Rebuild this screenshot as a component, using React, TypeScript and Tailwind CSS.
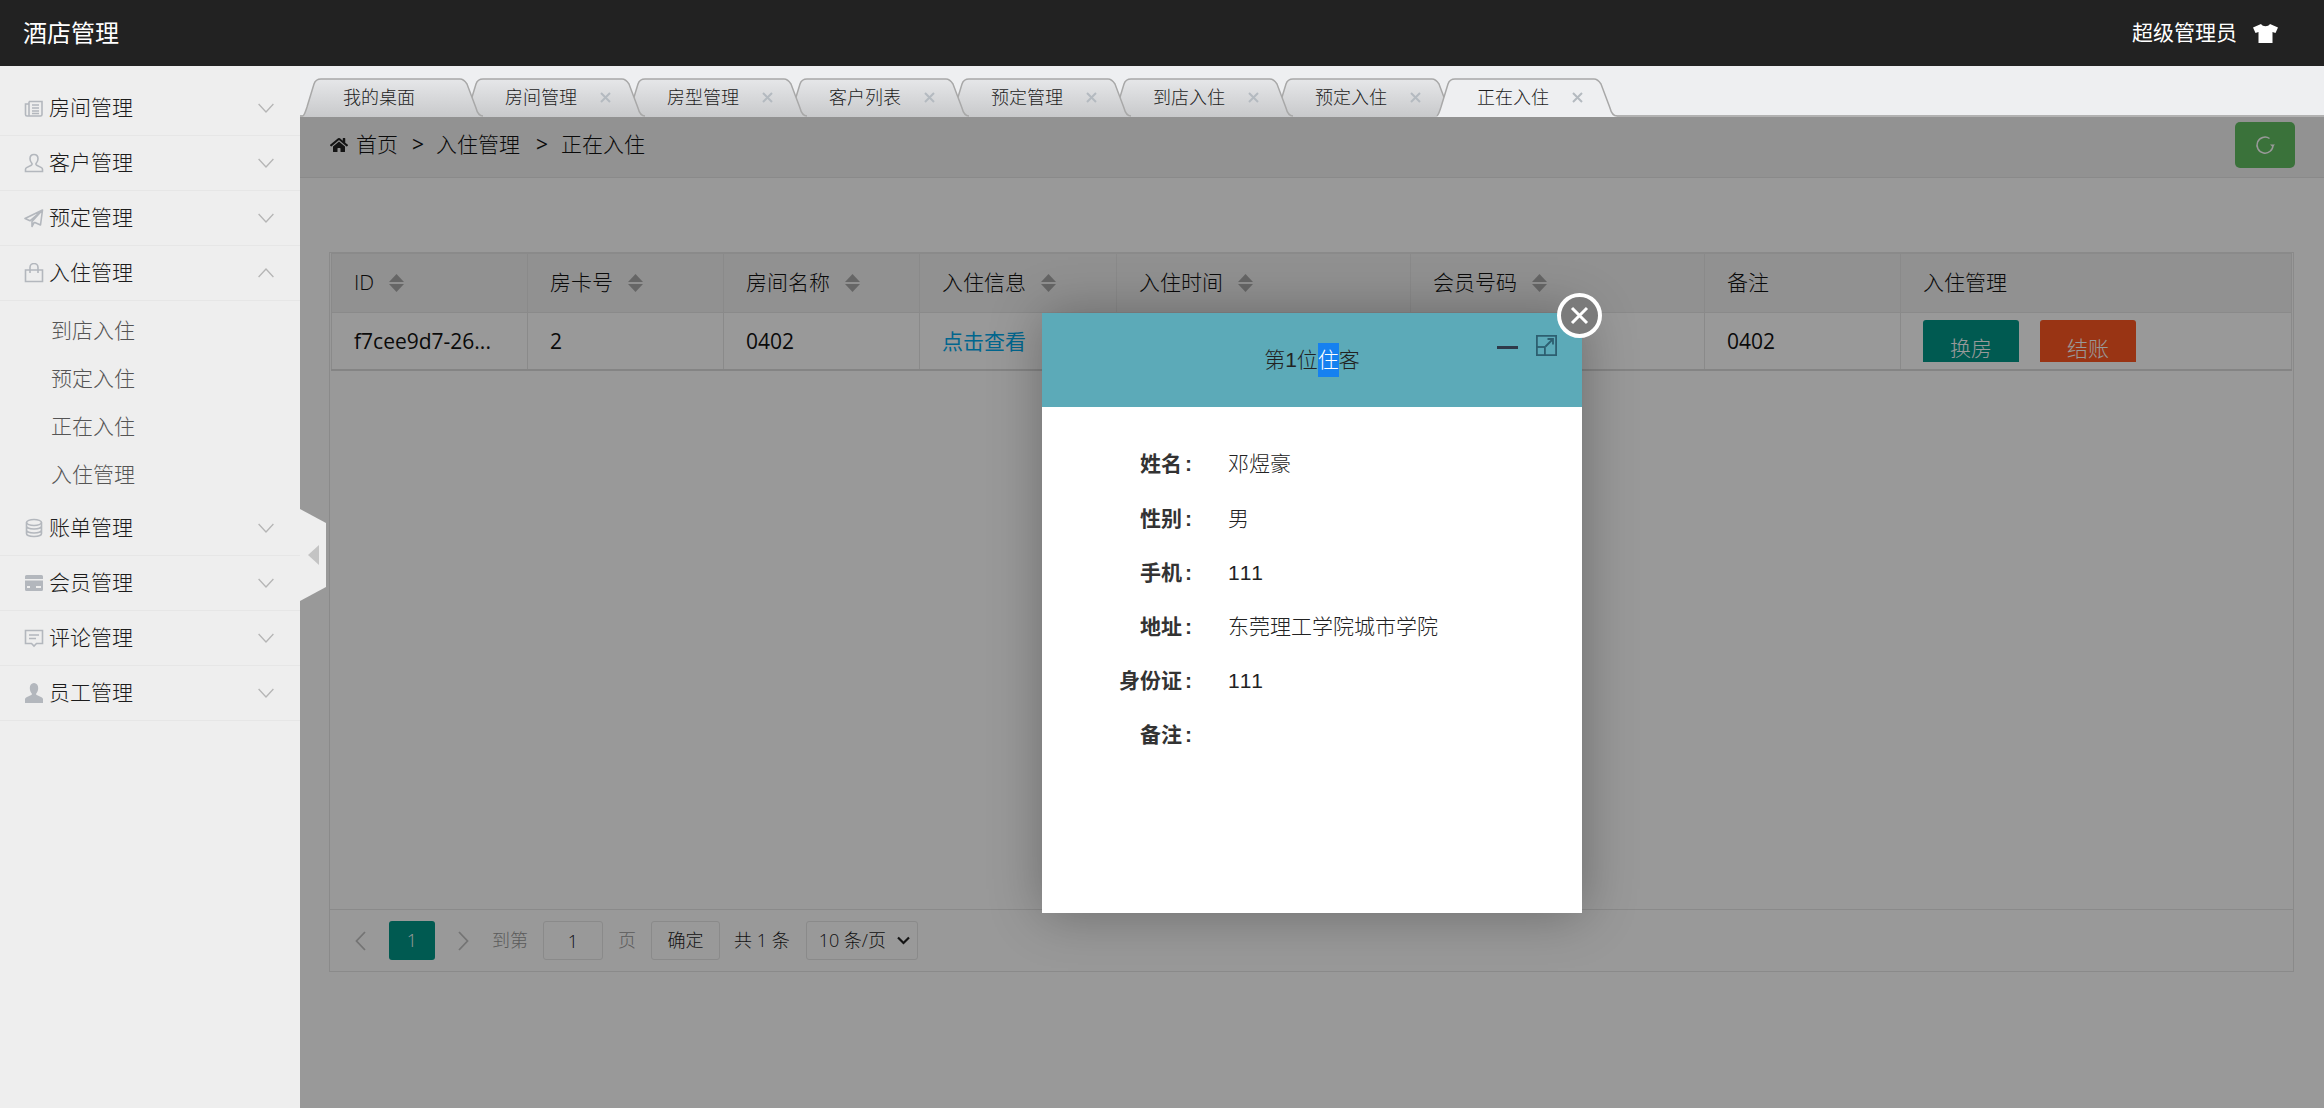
import React from "react";
import { FaHome } from "react-icons/fa";

const menuIcon = "w-5 h-5 shrink-0 text-[#b3b7bd]";

const IconNews = () => (
  <svg className={menuIcon} viewBox="0 0 20 20" fill="none" stroke="currentColor" strokeWidth="1.6">
    <path d="M5 3.500h13v13a1.500 1.500 0 0 1-1.500 1.500H3a1.500 1.500 0 0 1-1.500-1.500V6H5" />
    <path d="M5 3.500V18M8 7h7M8 10h7M8 13h7M8 15.500h7" />
  </svg>
);
const IconUser = () => (
  <svg className={menuIcon} viewBox="0 0 20 20" fill="none" stroke="currentColor" strokeWidth="1.6">
    <path d="M10 1.500c-2.400 0-4 1.800-4 4.300 0 2 .8 3.400 1.800 4.500.5.600.3 1.600-.5 2L2.600 14.600c-.8.400-1.100 1-1.100 1.900v2h17v-2c0-.9-.3-1.500-1.100-1.900l-4.700-2.300c-.8-.4-1-1.400-.5-2 1-1.100 1.800-2.500 1.800-4.500 0-2.500-1.600-4.300-4-4.300z" />
  </svg>
);
const IconPlane = () => (
  <svg className={menuIcon} viewBox="0 0 20 20" fill="none" stroke="currentColor" strokeWidth="1.6">
    <path d="M18.500 2 1 10.500l5 2.300L18.500 2zM18.500 2 16.500 17l-6.200-2.800M18.500 2 8 13.500v5l2.300-4.300" strokeLinejoin="round" />
  </svg>
);
const IconBag = () => (
  <svg className={menuIcon} viewBox="0 0 20 20" fill="none" stroke="currentColor" strokeWidth="1.6">
    <path d="M1.500 7h17v11.500h-17zM6 7V4.500a4 4 0 0 1 8 0V7M6 7v3M14 7v3" />
  </svg>
);
const IconDb = () => (
  <svg className={menuIcon} viewBox="0 0 20 20" fill="none" stroke="currentColor" strokeWidth="1.6">
    <ellipse cx="10" cy="4.500" rx="7.500" ry="3" />
    <path d="M2.500 4.500v11c0 1.700 3.400 3 7.500 3s7.500-1.300 7.500-3v-11M2.500 8c0 1.700 3.400 3 7.500 3s7.500-1.300 7.500-3M2.500 12c0 1.700 3.400 3 7.500 3s7.500-1.300 7.500-3" />
  </svg>
);
const IconCard = () => (
  <svg className={menuIcon} viewBox="0 0 20 20" fill="currentColor">
    <path d="M1 3.500A1.500 1.500 0 0 1 2.500 2h15A1.500 1.500 0 0 1 19 3.500V6H1zM1 7.500h18v9a1.500 1.500 0 0 1-1.500 1.500h-15A1.500 1.500 0 0 1 1 16.500zM3 13v2h3v-2zm9 0v2h5v-2z" fillRule="evenodd" />
  </svg>
);
const IconComment = () => (
  <svg className={menuIcon} viewBox="0 0 20 20" fill="none" stroke="currentColor" strokeWidth="1.6">
    <path d="M1.500 2.500h17v13h-6L10 18l-2.500-2.500h-6zM5 7h10M5 10.500h7" />
  </svg>
);
const IconPerson = () => (
  <svg className={menuIcon} viewBox="0 0 20 20" fill="currentColor">
    <path d="M10 0c2.700 0 4.200 2.200 4.200 5 0 2.400-.9 4.400-2 5.600v1.200l5.300 2.400c1 .5 1.500 1.200 1.500 2.300V20H1v-3.500c0-1.100.5-1.800 1.500-2.300l5.300-2.400v-1.200c-1.100-1.200-2-3.200-2-5.600C5.800 2.200 7.300 0 10 0z" />
  </svg>
);

const Chevron = ({ up = false }: { up?: boolean }) => (
  <svg width="16" height="10" viewBox="0 0 16 10" fill="none" stroke="#b5b5b5" strokeWidth="1.300" className="shrink-0">
    {up ? <path d="M.6 9 8 1l7.400 8" /> : <path d="M.6 1 8 9l7.400-8" />}
  </svg>
);

const MenuRow = ({ icon, label, open = false }: { icon: React.ReactNode; label: string; open?: boolean }) => (
  <div className="h-[55px] border-b border-[#e6e6e6] flex items-center pl-[24px] pr-[26px] text-[21px] text-[#1c1c1c]">
    {icon}
    <span className="ml-[5px] flex-1">{label}</span>
    <Chevron up={open} />
  </div>
);

const SubItem = ({ label }: { label: string }) => (
  <div className="h-[48px] flex items-center pl-[51px] text-[21px] text-[#555]">{label}</div>
);

const Sidebar = () => (
  <aside className="relative z-10 w-[300px] shrink-0 bg-[#eeeeee] pt-[15px]">
    <MenuRow icon={<IconNews />} label="房间管理" />
    <MenuRow icon={<IconUser />} label="客户管理" />
    <MenuRow icon={<IconPlane />} label="预定管理" />
    <MenuRow icon={<IconBag />} label="入住管理" open />
    <div className="pt-[6px] pb-[2px]">
      <SubItem label="到店入住" />
      <SubItem label="预定入住" />
      <SubItem label="正在入住" />
      <SubItem label="入住管理" />
    </div>
    <MenuRow icon={<IconDb />} label="账单管理" />
    <MenuRow icon={<IconCard />} label="会员管理" />
    <MenuRow icon={<IconComment />} label="评论管理" />
    <MenuRow icon={<IconPerson />} label="员工管理" />
    <svg className="absolute left-full top-[443px]" width="26" height="92" viewBox="0 0 26 92">
      <polygon points="0,0 26,14 26,78 0,92" fill="#eeeeee" />
      <polygon points="19,36 8,46 19,56" fill="#c4c4c4" />
    </svg>
  </aside>
);

const TABS = [
  { label: "我的桌面", z: "z-[8]", close: false, active: false },
  { label: "房间管理", z: "z-[7]", close: true, active: false },
  { label: "房型管理", z: "z-[6]", close: true, active: false },
  { label: "客户列表", z: "z-[5]", close: true, active: false },
  { label: "预定管理", z: "z-[4]", close: true, active: false },
  { label: "到店入住", z: "z-[3]", close: true, active: false },
  { label: "预定入住", z: "z-[2]", close: true, active: false },
  { label: "正在入住", z: "z-[9]", close: true, active: true },
];

const TabShape = ({ active }: { active: boolean }) => (
  <svg className="absolute inset-0" width="182" height="39" viewBox="0 0 182 39">
    <defs>
      <linearGradient id="tabfill" x1="0" y1="0" x2="0" y2="1">
        <stop offset="0" stopColor="#e6e7e9" />
        <stop offset="1" stopColor="#c8c9cb" />
      </linearGradient>
    </defs>
    <path
      d="M1 38C3 36 4 32 5 29L12 6C13 3 15 1 19 1L158 1C161 1 163 3 165 6L174 30C175 34 177 38 181 38V39H1z"
      fill={active ? "#eeeff1" : "url(#tabfill)"}
    />
    <path
      d="M1 38C3 36 4 32 5 29L12 6C13 3 15 1 19 1L158 1C161 1 163 3 165 6L174 30C175 34 177 38 181 38"
      fill="none"
      stroke="#a8a8a8"
      strokeWidth="1.500"
    />
  </svg>
);

const Tab = ({ label, z, close, active }: { label: string; z: string; close: boolean; active: boolean }) => (
  <div className={`relative ${z} w-[182px] h-[39px] -mr-[20px] shrink-0`}>
    <TabShape active={active} />
    <div className="relative flex items-center h-[39px] pl-[41px] text-[18px] text-[#1c1c1c]">
      <span>{label}</span>
      {close && (
        <svg className="ml-[23px]" width="11" height="11" viewBox="0 0 11 11" stroke="#b4bac0" strokeWidth="2">
          <path d="M1 1l9 9M10 1l-9 9" />
        </svg>
      )}
    </div>
  </div>
);

const Sort = () => (
  <svg className="ml-[15px] shrink-0" width="15" height="18" viewBox="0 0 15 18" fill="#aaaaaa">
    <path d="M7.500 0 15 8H0zM0 10h15l-7.500 8z" />
  </svg>
);

const COLS = [
  { label: "ID", w: "w-[196px]", sort: true },
  { label: "房卡号", w: "w-[196px]", sort: true },
  { label: "房间名称", w: "w-[196px]", sort: true },
  { label: "入住信息", w: "w-[197px]", sort: true },
  { label: "入住时间", w: "w-[294px]", sort: true },
  { label: "会员号码", w: "w-[294px]", sort: true },
  { label: "备注", w: "w-[196px]", sort: false },
  { label: "入住管理", w: "", sort: false },
];

const td = "border border-[#e6e6e6] px-[22px] pt-[2px] h-[57px] text-[21px] font-normal text-left";

const DataTable = () => (
  <table className="w-[1961px] table-fixed border-collapse ml-px">
    <thead>
      <tr className="bg-[#f2f2f2] h-[59px]">
        {COLS.map((c) => (
          <th key={c.label} className={`${c.w} border border-[#e6e6e6] px-[22px] text-[21px] text-[#111] font-light text-left`}>
            <div className="flex items-center">
              <span>{c.label}</span>
              {c.sort && <Sort />}
            </div>
          </th>
        ))}
      </tr>
    </thead>
    <tbody>
      <tr className="border-b-2 border-[#dddddd] text-[#111] font-light">
        <td className={`${td} font-light`}><div className="whitespace-nowrap">f7cee9d7-26...</div></td>
        <td className={`${td} font-light`}>2</td>
        <td className={`${td} font-light`}>0402</td>
        <td className={`${td} font-light text-[#01aaed]`}>点击查看</td>
        <td className={td}></td>
        <td className={td}></td>
        <td className={`${td} font-light`}>0402</td>
        <td className="border border-[#e6e6e6] px-[22px] h-[57px]">
          <div className="flex gap-[21px] h-[42px] overflow-hidden">
            <button className="w-[96px] h-[57px] leading-[57px] bg-[#009688] text-white rounded-[3px] text-[21px] shrink-0">换房</button>
            <button className="w-[96px] h-[57px] leading-[57px] bg-[#ff5722] text-white rounded-[3px] text-[21px] shrink-0">结账</button>
          </div>
        </td>
      </tr>
    </tbody>
  </table>
);

const Pagination = () => (
  <div className="h-[62px] border-t border-[#e6e6e6] flex items-center pl-[25px] text-[18px] text-[#1c1c1c]">
    <svg width="11" height="20" viewBox="0 0 11 20" fill="none" stroke="#c2c2c2" strokeWidth="1.800">
      <path d="M10 1 1.500 10l8.500 9" />
    </svg>
    <div className="ml-[23px] w-[46px] h-[39px] bg-[#009688] rounded-[3px] text-white flex items-center justify-center">1</div>
    <svg className="ml-[23px]" width="11" height="20" viewBox="0 0 11 20" fill="none" stroke="#c2c2c2" strokeWidth="1.800">
      <path d="M1 1l8.500 9L1 19" />
    </svg>
    <span className="ml-[23px] text-[#999]">到第</span>
    <input readOnly value="1" className="ml-[15px] w-[60px] h-[39px] border border-[#e6e6e6] rounded-[3px] text-center bg-white" />
    <span className="ml-[15px] text-[#999]">页</span>
    <button className="ml-[15px] w-[69px] h-[39px] border border-[#e6e6e6] rounded-[3px] bg-white">确定</button>
    <span className="ml-[14px]">共 1 条</span>
    <div className="ml-[16px] w-[112px] h-[39px] border border-[#e6e6e6] rounded-[3px] bg-white flex items-center pl-[12px] pr-[7px] justify-between">
      <span>10 条/页</span>
      <svg width="13" height="9" viewBox="0 0 13 9" fill="none" stroke="#222" strokeWidth="2.200">
        <path d="M1 1.500l5.500 5.500L12 1.500" />
      </svg>
    </div>
  </div>
);

const INFO = [
  { k: "姓名", v: "邓煜豪" },
  { k: "性别", v: "男" },
  { k: "手机", v: "111" },
  { k: "地址", v: "东莞理工学院城市学院" },
  { k: "身份证", v: "111" },
  { k: "备注", v: "" },
];

const Modal = () => (
  <div className="absolute left-[742px] top-[196px] z-20 w-[540px] h-[600px] bg-white shadow-[1px_1px_50px_rgba(0,0,0,0.3)] [font-kerning:none] font-['Liberation_Sans','Noto_Sans_CJK_SC',sans-serif]">
    <div className="relative h-[94px] bg-[#5caab8] flex items-center justify-center text-[21px] text-[#222]">
      <span className="flex items-center">
        第1位<span className="inline-block h-[34px] leading-[34px] bg-[#1681f0] text-white">住</span>客
      </span>
      <span className="absolute left-[455px] top-[33px] w-[21px] h-[3px] bg-[#2f3a4a]" />
      <svg className="absolute left-[494px] top-[22px]" width="21" height="21" viewBox="0 0 21 21" fill="none" stroke="#2d5f70" strokeWidth="1.800">
        <path d="M.9 12V.9h19.200v19.200H9" />
        <rect x=".9" y="12" width="8" height="8.100" />
        <path d="M9.500 11.500 17 4M11.500 4H17v5.500" />
      </svg>
    </div>
    <button className="absolute -right-[20px] -top-[20px] w-[45px] h-[45px] rounded-full border-[4px] border-white bg-[#7b7b7b] flex items-center justify-center">
      <svg width="19" height="19" viewBox="0 0 19 19" stroke="#fff" strokeWidth="3">
        <path d="M2 2l15 15M17 2 2 17" />
      </svg>
    </button>
    <div className="pt-[30px] text-[21px]">
      {INFO.map((r) => (
        <div key={r.k} className="h-[54.200px] flex items-center">
          <span className="w-[150px] text-right font-bold text-[#333] whitespace-nowrap">
            {r.k}
            <span className="ml-[3px]">:</span>
          </span>
          <span className="ml-[36px] text-[#222]">{r.v}</span>
        </div>
      ))}
    </div>
  </div>
);

export default function App() {
  return (
    <div className="w-[2324px] h-screen overflow-hidden flex flex-col bg-white font-light font-['Open_Sans','Noto_Sans_CJK_SC',sans-serif]">
      <header className="h-[66px] shrink-0 bg-[#222222] flex items-center justify-between pl-[23px] pr-[46px] text-white font-normal">
        <span className="text-[24px]">酒店管理</span>
        <div className="flex items-center text-[21px]">
          <span>超级管理员</span>
          <svg className="ml-[16px]" width="25" height="19" viewBox="0 0 25 19" fill="#fff">
            <path d="M8 0c1 1.500 2.800 2.200 4.500 2.200S16 1.500 17 0l8 3.500-2.500 5.500-3-1V19h-14V8l-3 1L0 3.500z" />
          </svg>
        </div>
      </header>
      <div className="flex flex-1 min-h-0">
        <Sidebar />
        <main className="flex-1 min-w-0 flex flex-col">
          <div className="h-[51px] shrink-0 bg-[#eeeff1] border-b-2 border-[#b2b2b2] pt-[12px] pl-[2px] flex">
            {TABS.map((t) => (
              <Tab key={t.label} {...t} />
            ))}
          </div>
          <div className="relative flex-1 min-h-0 bg-white">
            <div className="h-[61px] pb-[4px] bg-[#f3f3f3] border-b border-[#e6e6e6] flex items-center justify-between pl-[30px] pr-[29px] text-[21px] text-[#111]">
              <div className="flex items-center">
                <FaHome className="text-[18px] text-[#222]" />
                <span className="ml-[8px]">首页</span>
                <span className="ml-[14px] font-normal">&gt;</span>
                <span className="ml-[12px]">入住管理</span>
                <span className="ml-[16px] font-normal">&gt;</span>
                <span className="ml-[13px]">正在入住</span>
              </div>
              <button className="w-[60px] h-[46px] rounded-[5px] bg-[#62be62] flex items-center justify-center">
                <svg width="20" height="20" viewBox="0 0 20 20" fill="none" stroke="#fff" strokeWidth="1.500">
                  <path d="M14.500 3.500A8 8 0 1 0 18 10" />
                  <path d="M15 9.500h5l-2.500 2.500z" fill="#fff" stroke="none" />
                </svg>
              </button>
            </div>
            <div className="ml-[29px] mr-[30px] mt-[74px] h-[720px] border border-[#e6e6e6] flex flex-col justify-between">
              <DataTable />
              <Pagination />
            </div>
            <div className="absolute inset-0 bg-black/40" />
            <Modal />
          </div>
        </main>
      </div>
    </div>
  );
}
